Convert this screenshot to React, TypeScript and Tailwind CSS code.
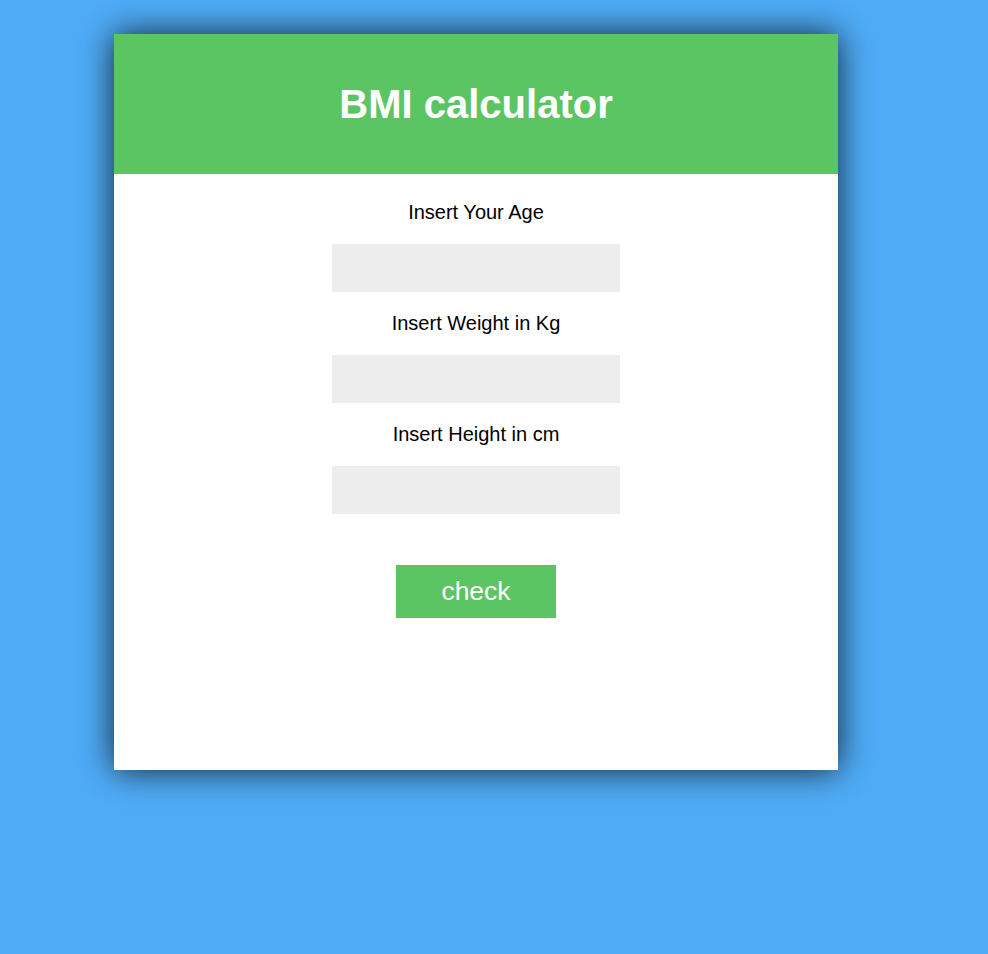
import { useState } from "react";

export default function App() {
  const [age, setAge] = useState("");
  const [weight, setWeight] = useState("");
  const [height, setHeight] = useState("");

  const fields = [
    { label: "Insert Your Age", value: age, set: setAge },
    { label: "Insert Weight in Kg", value: weight, set: setWeight },
    { label: "Insert Height in cm", value: height, set: setHeight },
  ];

  return (
    <div className="min-h-screen bg-[#4facf7] pt-[34px] pl-[114px] font-['Liberation_Sans',Arial,sans-serif]">
      <div className="w-[724px] h-[736px] bg-white shadow-[0_0_32px_rgba(0,0,0,0.8)]">
        {/* Header */}
        <div className="h-[140px] bg-[#5cc563] flex items-center justify-center">
          <h1 className="text-[40px] font-bold text-white leading-none">BMI calculator</h1>
        </div>

        {/* Form */}
        <div className="flex flex-col items-center pt-[27px]">
          {fields.map((f, i) => (
            <div key={f.label} className={`flex flex-col items-center ${i > 0 ? "mt-[20px]" : ""}`}>
              <label className="text-[20px] leading-[22px] text-black">{f.label}</label>
              <input
                type="text"
                value={f.value}
                onChange={(e) => f.set(e.target.value)}
                className="mt-[21px] w-[288px] h-[48px] bg-[#ededed] outline-none px-3 text-[18px]"
              />
            </div>
          ))}
          <button className="mt-[51px] w-[160px] h-[53px] bg-[#5cc563] text-white text-[26.5px] leading-none">
            check
          </button>
        </div>
      </div>
    </div>
  );
}
